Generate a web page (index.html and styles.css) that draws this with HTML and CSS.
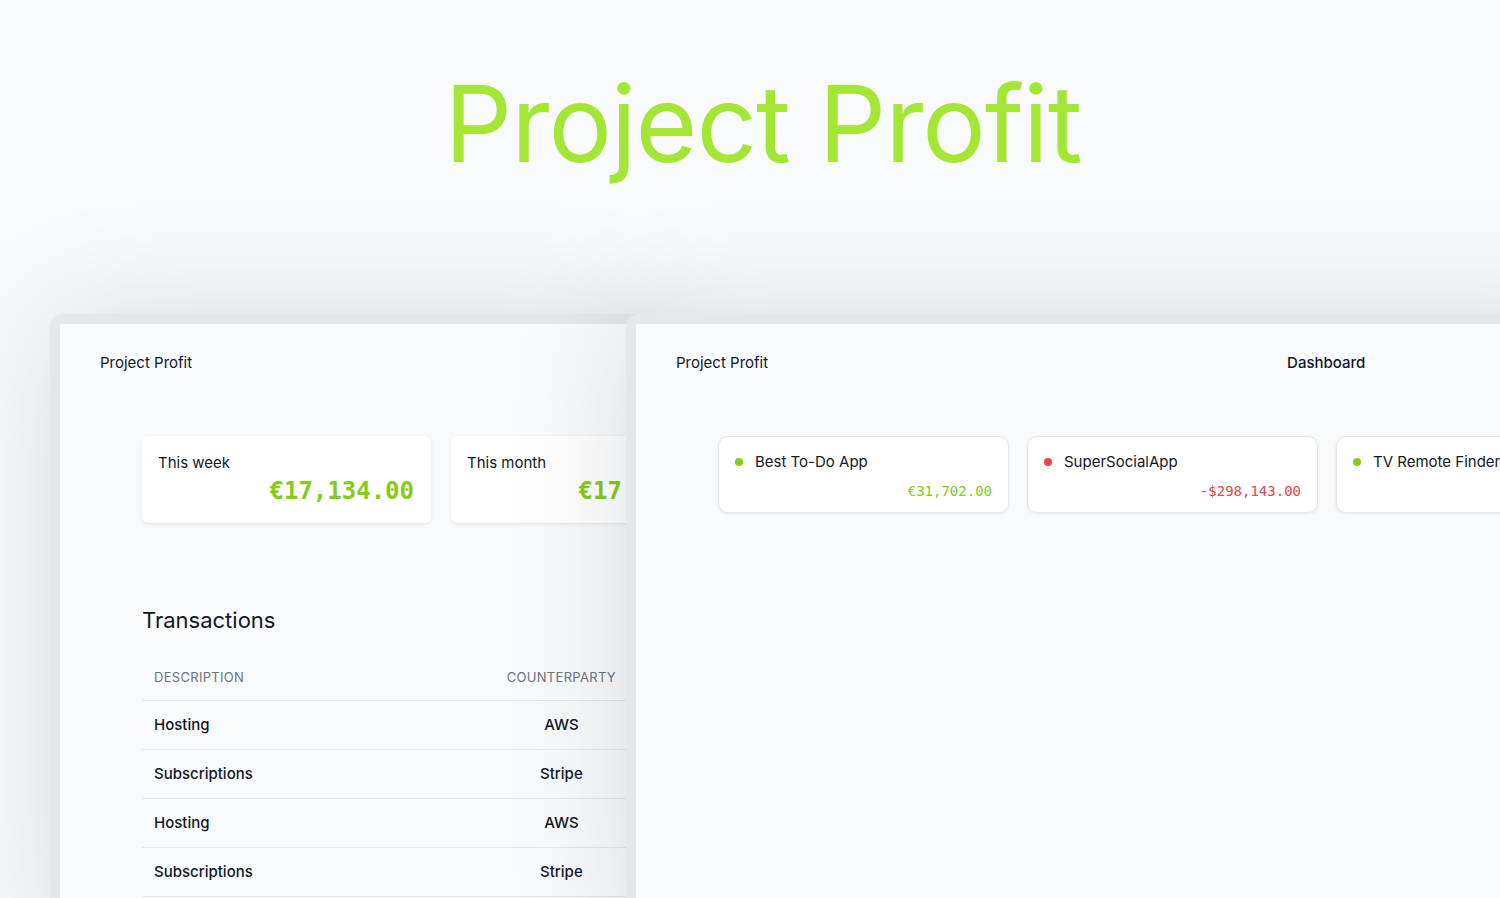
FILE: index.html
```html
<!DOCTYPE html>
<html lang="en">
<head>
<meta charset="UTF-8" />
<title>Project Profit</title>
<meta name="viewport" content="width=device-width, initial-scale=1.0" />
<link rel="stylesheet" href="styles.css">
</head>
<body>

<header class="hero">
  <h1>Project Profit</h1>
</header>

<main class="stage">

  <!-- transactions view -->
  <section class="window window-left">
    <div class="topbar">
      <span class="brand">Project Profit</span>
    </div>
    <div class="content">
      <div class="stats">
        <div class="stat">
          <p class="stat-label">This week</p>
          <p class="stat-value">€17,134.00</p>
        </div>
        <div class="stat">
          <p class="stat-label">This month</p>
          <p class="stat-value">€17,134.00</p>
        </div>
      </div>

      <h2>Transactions</h2>
      <table class="tx">
        <thead>
          <tr>
            <th>Description</th>
            <th class="col-party">Counterparty</th>
          </tr>
        </thead>
        <tbody>
          <tr><td>Hosting</td><td class="col-party">AWS</td></tr>
          <tr><td>Subscriptions</td><td class="col-party">Stripe</td></tr>
          <tr><td>Hosting</td><td class="col-party">AWS</td></tr>
          <tr><td>Subscriptions</td><td class="col-party">Stripe</td></tr>
        </tbody>
      </table>
    </div>
  </section>

  <!-- dashboard view -->
  <section class="window window-right">
    <div class="topbar">
      <span class="brand">Project Profit</span>
      <nav class="nav"><a href="#">Dashboard</a></nav>
    </div>
    <div class="content">
      <div class="projects">
        <div class="project">
          <div class="project-head"><span class="dot"></span>Best To-Do App</div>
          <div class="project-amount">€31,702.00</div>
        </div>
        <div class="project">
          <div class="project-head"><span class="dot dot-red"></span>SuperSocialApp</div>
          <div class="project-amount negative">-$298,143.00</div>
        </div>
        <div class="project">
          <div class="project-head"><span class="dot"></span>TV Remote Finder</div>
          <div class="project-amount">€4,310.00</div>
        </div>
      </div>
    </div>
  </section>

</main>

</body>
</html>
```

FILE: styles.css
```css
body {
  margin: 0;
  height: 898px;
  overflow: hidden;
  background: #f9fafb;
  color: #111827;
  font-family: "Inter", "Noto Sans", sans-serif;
}

.hero {
  padding: 71px 0 0 26px;
  margin-bottom: 137px;
  text-align: center;
}
.hero h1 {
  margin: 0;
  font-size: 106px;
  line-height: 1;
  font-weight: 400;
  letter-spacing: -1px;
  color: #a3e635;
}

.stage {
  display: flex;
  align-items: flex-start;
  padding-left: 50px;
}

.window {
  position: relative;
  box-sizing: border-box;
  flex-shrink: 0;
  height: 640px;
  background: #f9fafb;
  border: 10px solid #e5e7eb;
  border-bottom: 0;
  border-radius: 12px 12px 0 0;
  box-shadow: 0 0 120px rgba(17, 24, 39, 0.14);
}
.window-left {
  width: 600px;
}
.window-right {
  width: 1000px;
  margin-left: -24px;
}

.topbar {
  display: flex;
  align-items: center;
  padding: 30px 40px 0;
  font-size: 15px;
  line-height: 18px;
}
.nav {
  margin-left: 519px;
}
.nav a {
  color: #111827;
  font-weight: 500;
  text-decoration: none;
}

.content {
  padding: 64px 0 0 82px;
}

/* stat cards */
.stats {
  display: flex;
  gap: 20px;
}
.stat {
  width: 289px;
  box-sizing: border-box;
  padding: 18px 17px 18px 16px;
  background: #fff;
  border-radius: 6px;
  box-shadow: 0 1px 3px rgba(0, 0, 0, 0.1);
  flex-shrink: 0;
}
.stat-label {
  margin: 0;
  font-size: 15px;
  line-height: 18px;
}
.stat-value {
  margin: 5px 0 0;
  text-align: right;
  font-family: "DejaVu Sans Mono", "Liberation Mono", monospace;
  font-size: 24px;
  line-height: 28px;
  font-weight: bold;
  color: #84cc16;
}

/* transactions */
h2 {
  margin: 83px 0 20px;
  font-size: 22px;
  line-height: 28px;
  font-weight: 400;
}
.tx {
  width: 486px;
  border-collapse: collapse;
}
.tx th {
  padding: 15px 12px;
  font-size: 13px;
  line-height: 16px;
  font-weight: 400;
  text-align: left;
  text-transform: uppercase;
  letter-spacing: 0.3px;
  color: #6b7280;
  border-bottom: 1px solid #e5e7eb;
}
.tx td {
  padding: 14px 12px;
  font-size: 15px;
  line-height: 20px;
  font-weight: 500;
  border-bottom: 1px solid #e5e7eb;
}
.tx .col-party {
  width: 109px;
  text-align: center;
}

/* project cards */
.projects {
  display: flex;
  gap: 18px;
}
.project {
  width: 291px;
  box-sizing: border-box;
  flex-shrink: 0;
  padding: 16px 16px 12px;
  background: #fff;
  border: 1px solid #e5e7eb;
  border-radius: 10px;
  box-shadow: 0 1px 3px rgba(0, 0, 0, 0.08);
}
.project-head {
  display: flex;
  align-items: center;
  gap: 12px;
  font-size: 15px;
  line-height: 18px;
}
.dot {
  width: 8px;
  height: 8px;
  border-radius: 50%;
  background: #84cc16;
}
.dot-red {
  background: #ef4444;
}
.project-amount {
  margin-top: 11px;
  text-align: right;
  font-family: "DejaVu Sans Mono", "Liberation Mono", monospace;
  font-size: 14px;
  line-height: 18px;
  color: #84cc16;
}
.project-amount.negative {
  color: #ef4444;
}
```
